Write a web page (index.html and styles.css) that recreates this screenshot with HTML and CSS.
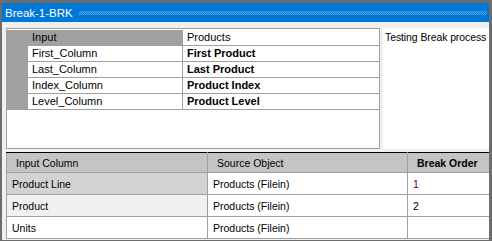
FILE: index.html
```html
<!DOCTYPE html>
<html lang="en">
<head>
    <meta charset="UTF-8">
    <title>Break-1-BRK</title>
    <link rel="stylesheet" href="styles.css">
</head>
<body>
    <div class="window">
        <!-- title bar -->
        <div class="titlebar">
            <span class="title">Break-1-BRK</span>
            <span class="grip"></span>
        </div>

        <div class="content">
            <div class="top">
                <!-- property grid -->
                <div class="propgrid">
                    <div class="prow head">
                        <div class="margin"></div>
                        <div class="label">Input</div>
                        <div class="value normal">Products</div>
                    </div>
                    <div class="prow">
                        <div class="margin"></div>
                        <div class="label">First_Column</div>
                        <div class="value">First Product</div>
                    </div>
                    <div class="prow">
                        <div class="margin"></div>
                        <div class="label">Last_Column</div>
                        <div class="value">Last Product</div>
                    </div>
                    <div class="prow">
                        <div class="margin"></div>
                        <div class="label">Index_Column</div>
                        <div class="value">Product Index</div>
                    </div>
                    <div class="prow">
                        <div class="margin"></div>
                        <div class="label">Level_Column</div>
                        <div class="value">Product Level</div>
                    </div>
                </div>
                <div class="desc">Testing Break process</div>
            </div>

            <!-- columns grid -->
            <table class="grid">
                <thead>
                    <tr>
                        <th class="col-input">Input Column</th>
                        <th class="col-source">Source Object</th>
                        <th class="col-order">Break Order</th>
                    </tr>
                </thead>
                <tbody>
                    <tr>
                        <td class="selected">Product Line</td>
                        <td>Products (Filein)</td>
                        <td class="first-num">1</td>
                    </tr>
                    <tr>
                        <td class="alt">Product</td>
                        <td>Products (Filein)</td>
                        <td>2</td>
                    </tr>
                    <tr>
                        <td>Units</td>
                        <td>Products (Filein)</td>
                        <td></td>
                    </tr>
                </tbody>
            </table>
        </div>
    </div>
</body>
</html>
```

FILE: styles.css
```css
* {
    margin: 0;
    padding: 0;
    box-sizing: border-box;
    font-family: 'Liberation Sans', Arial, sans-serif;
}

body {
    background-color: #6d6d6d;
    width: 492px;
    height: 241px;
    overflow: hidden;
}

.window {
    width: 492px;
    height: 241px;
    border-style: solid;
    border-color: #6d6d6d;
    border-width: 3px 3px 1px 2px;
    display: flex;
    flex-direction: column;
}

/* title bar */
.titlebar {
    height: 19px;
    background-color: #0078d7;
    display: flex;
    align-items: center;
    padding-left: 3px;
}

.title {
    color: #fff;
    font-size: 11.5px;
}

.grip {
    flex: 1;
    height: 4px;
    margin: 0 2px 0 6px;
    background: repeating-conic-gradient(#5aa9e6 0 25%, transparent 0 50%) 0 0 / 2px 2px;
}

.content {
    flex: 1;
    background-color: #f0f0f0;
    padding: 6px 0 0 4px;
    display: flex;
    flex-direction: column;
}

.top {
    display: flex;
    gap: 3px;
    height: 121px;
}

/* property grid */
.propgrid {
    width: 374px;
    border: 1px solid #a0a0a0;
    background-color: #fff;
    padding-top: 1px;
}

.prow {
    display: flex;
    height: 16px;
    font-size: 11px;
    line-height: 15px;
}

.prow .margin {
    width: 21px;
    background-color: #a0a0a0;
}

.prow .label {
    width: 155px;
    padding-left: 4px;
    border-bottom: 1px solid #a0a0a0;
    border-right: 1px solid #a0a0a0;
}

.prow .value {
    flex: 1;
    padding-left: 4px;
    font-weight: bold;
    border-bottom: 1px solid #a0a0a0;
    margin-right: -1px;
}

.prow .value.normal {
    font-weight: normal;
}

.prow.head .label {
    background-color: #a0a0a0;
}

.desc {
    flex: 1;
    background-color: #fff;
    font-size: 10.5px;
    letter-spacing: -0.1px;
    padding: 3px 0 0 2px;
    white-space: nowrap;
}

/* data grid */
.grid {
    margin-top: 3px;
    width: 483px;
    border-collapse: collapse;
    table-layout: fixed;
    background-color: #fff;
    border-left: 1px solid #a0a0a0;
    border-top: 1px solid #000;
    font-size: 10.5px;
}

.grid th {
    height: 20px;
    background-color: #c4c4c4;
    text-align: left;
    font-weight: normal;
    padding-left: 9px;
    border-right: 1px solid #a0a0a0;
    border-bottom: 1px solid #a0a0a0;
}

.grid th.col-input {
    width: 201px;
}

.grid th.col-source {
    width: 200px;
}

.grid th.col-order {
    font-weight: bold;
    border-right: none;
}

.grid td {
    height: 22px;
    padding-left: 5px;
    border-right: 1px solid #a0a0a0;
    border-bottom: 1px solid #a0a0a0;
}

.grid td:last-child {
    border-right: none;
}

.grid td.selected {
    background-color: #d3d3d3;
}

.grid td.alt {
    background-color: #f0f0f0;
}

.grid td.first-num {
    color: #3c0a28;
}
```
